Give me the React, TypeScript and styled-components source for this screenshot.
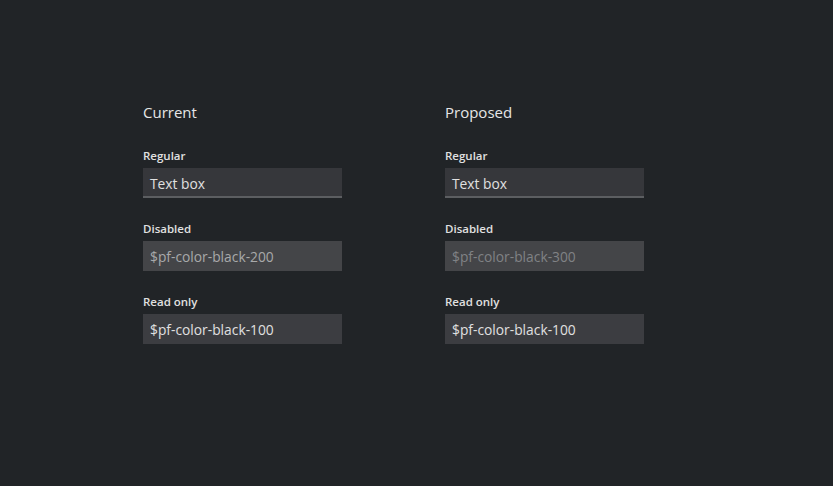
import React from 'react'
import styled, { createGlobalStyle } from 'styled-components'

const GlobalStyle = createGlobalStyle`
  html, body {
    margin: 0;
    padding: 0;
    background: #212427;
  }
  body {
    font-family: "Open Sans", "Liberation Sans", sans-serif;
  }
`;

const Page = styled.div`
  width: 833px;
  height: 486px;
  box-sizing: border-box;
  padding: 100px 0 0 143px;
  display: flex;
  flex-direction: row;
  gap: 103px;
`;

const Column = styled.div`
  width: 199px;
  display: flex;
  flex-direction: column;
`;

const Title = styled.div`
  font-size: 15px;
  line-height: 24px;
  color: #e6e6e6;
  margin-bottom: 24px;
`;

const Group = styled.div`
  display: flex;
  flex-direction: column;
  margin-bottom: 23px;
`;

const Label = styled.div`
  font-size: 11.5px;
  font-weight: 600;
  line-height: 16px;
  color: #e0e0e0;
  margin-bottom: 4px;
`;

const Field = styled.div<{
  variant: string,
  textColor?: string,
}>`
  height: 30px;
  box-sizing: border-box;
  padding: 0 7px;
  display: flex;
  align-items: center;
  font-size: 13.8px;
  background-color: ${props => {
      switch(props.variant) {
        case 'disabled':
          return '#444548'
        case 'readonly':
          return '#3c3d41'
        default:
          return '#36373b'
      }
    }
  };
  border-bottom: ${props => props.variant == 'regular' ? '2px solid #5c5e61' : 'none'};
  padding-top: ${props => props.variant == 'regular' ? '2px' : '0'};
  color: ${props => props.textColor || '#e0e0e0'};
`;

interface IColumnProps {
  title: string;
  disabledText: string;
  disabledColor: string;
}

const FieldColumn = (props: IColumnProps) => (
  <Column>
    <Title>{props.title}</Title>
    <Group>
      <Label>Regular</Label>
      <Field variant="regular">Text box</Field>
    </Group>
    <Group>
      <Label>Disabled</Label>
      <Field variant="disabled" textColor={props.disabledColor}>{props.disabledText}</Field>
    </Group>
    <Group>
      <Label>Read only</Label>
      <Field variant="readonly">$pf-color-black-100</Field>
    </Group>
  </Column>
)

export default function App() {
  return (
    <>
      <GlobalStyle />
      <Page>
        <FieldColumn title="Current" disabledText="$pf-color-black-200" disabledColor="#a8a9aa" />
        <FieldColumn title="Proposed" disabledText="$pf-color-black-300" disabledColor="#808285" />
      </Page>
    </>
  )
}
